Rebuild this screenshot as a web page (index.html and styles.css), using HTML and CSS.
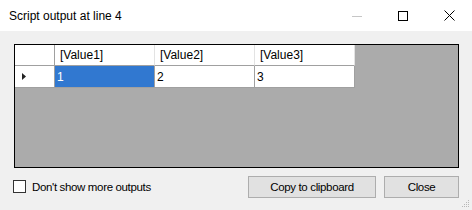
FILE: index.html
```html
<!DOCTYPE html>
<html>
<head>
<meta charset="utf-8">
<link rel="stylesheet" href="styles.css">
</head>
<body>
<div class="window">
  <div class="titlebar">
    <span class="title">Script output at line 4</span>
    <div class="controls">
      <span class="ctl min"><svg width="10" height="10" viewBox="0 0 10 10"><path d="M0 5.5H10" stroke="#c6c6c6" stroke-width="1"/></svg></span>
      <span class="ctl max"><svg width="10" height="10" viewBox="0 0 10 10"><rect x="0.5" y="0.5" width="9" height="9" fill="none" stroke="#000" stroke-width="1"/></svg></span>
      <span class="ctl close"><svg width="11" height="11" viewBox="0 0 11 11"><path d="M0.5 0.5L10.5 10.5M10.5 0.5L0.5 10.5" stroke="#000" stroke-width="1"/></svg></span>
    </div>
  </div>
  <div class="content">
    <div class="grid">
      <div class="table">
        <div class="cell rowhead head"></div>
        <div class="cell head">[Value1]</div>
        <div class="cell head">[Value2]</div>
        <div class="cell head">[Value3]</div>
        <div class="cell rowhead"><svg width="4" height="7" viewBox="0 0 4 7"><path d="M0 0L4 3.5L0 7Z" fill="#222"/></svg></div>
        <div class="cell data selected">1</div>
        <div class="cell data">2</div>
        <div class="cell data">3</div>
      </div>
    </div>
    <div class="footer">
      <label class="check"><span class="box"></span><span>Don't show more outputs</span></label>
      <div class="buttons">
        <button class="btn copy">Copy to clipboard</button>
        <button class="btn close-btn">Close</button>
      </div>
    </div>
  </div>
  <div class="grip">
    <svg width="8" height="8" viewBox="0 0 8 8" fill="#b8b8b8">
      <rect x="6" y="0" width="1" height="1"/>
      <rect x="4" y="2" width="1" height="1"/><rect x="6" y="2" width="1" height="1"/>
      <rect x="2" y="4" width="1" height="1"/><rect x="4" y="4" width="1" height="1"/><rect x="6" y="4" width="1" height="1"/>
      <rect x="0" y="6" width="1" height="1"/><rect x="2" y="6" width="1" height="1"/><rect x="4" y="6" width="1" height="1"/><rect x="6" y="6" width="1" height="1"/>
    </svg>
  </div>
</div>
</body>
</html>
```
FILE: styles.css
```css
* { box-sizing: border-box; }
html, body { margin: 0; padding: 0; }
body {
  width: 472px;
  height: 210px;
  overflow: hidden;
  font-family: "Liberation Sans", Arial, sans-serif;
  font-size: 12px;
  color: #000;
}
.window {
  position: relative;
  width: 472px;
  height: 210px;
  background: #f0f0f0;
}
.titlebar {
  height: 31px;
  background: #fff;
  display: flex;
  align-items: center;
  justify-content: space-between;
}
.title {
  padding-left: 9px;
  font-size: 12px;
  color: #000;
}
.controls {
  display: flex;
  height: 31px;
}
.ctl {
  width: 46px;
  display: flex;
  align-items: center;
  justify-content: center;
}
.ctl svg { display: block; }
.content {
  padding: 13px 13px 0 14px;
}
.grid {
  width: 445px;
  height: 124px;
  border: 1px solid #000;
  background: #ababab;
}
.table {
  display: grid;
  grid-template-columns: 40px 100px 100px 100px;
  grid-template-rows: 21px 22px;
  width: 340px;
}
.cell {
  background: #fff;
  border-right: 1px solid #a0a0a0;
  border-bottom: 1px solid #a0a0a0;
  display: flex;
  align-items: center;
  white-space: nowrap;
}
.head {
  padding-left: 5px;
  border-right-color: #e3e3e3;
}
.rowhead {
  padding-left: 7px;
  border-right-color: #a0a0a0;
}
.rowhead.head { border-right-color: #a0a0a0; }
.data {
  padding-left: 2px;
}
.selected {
  background: #3178d0;
  color: #fff;
}
.footer {
  display: flex;
  justify-content: space-between;
  align-items: center;
  margin-top: 7px;
  height: 23px;
  font-size: 11.5px;
  letter-spacing: -0.35px;
}
.check {
  display: flex;
  align-items: center;
  margin-left: -1px;
}
.box {
  width: 13px;
  height: 13px;
  border: 1px solid #333;
  background: #fff;
  margin-right: 6px;
}
.buttons {
  display: flex;
  gap: 8px;
}
.btn {
  font-family: "Liberation Sans", Arial, sans-serif;
  font-size: 11.5px;
  letter-spacing: -0.35px;
  height: 22px;
  background: #e1e1e1;
  border: 1px solid #adadad;
  color: #000;
  padding: 0;
  margin: 0;
}
.copy { width: 128px; }
.close-btn { width: 75px; }
.grip {
  position: absolute;
  right: 2px;
  bottom: 2px;
  width: 8px;
  height: 8px;
}
.grip svg { display: block; }
```
